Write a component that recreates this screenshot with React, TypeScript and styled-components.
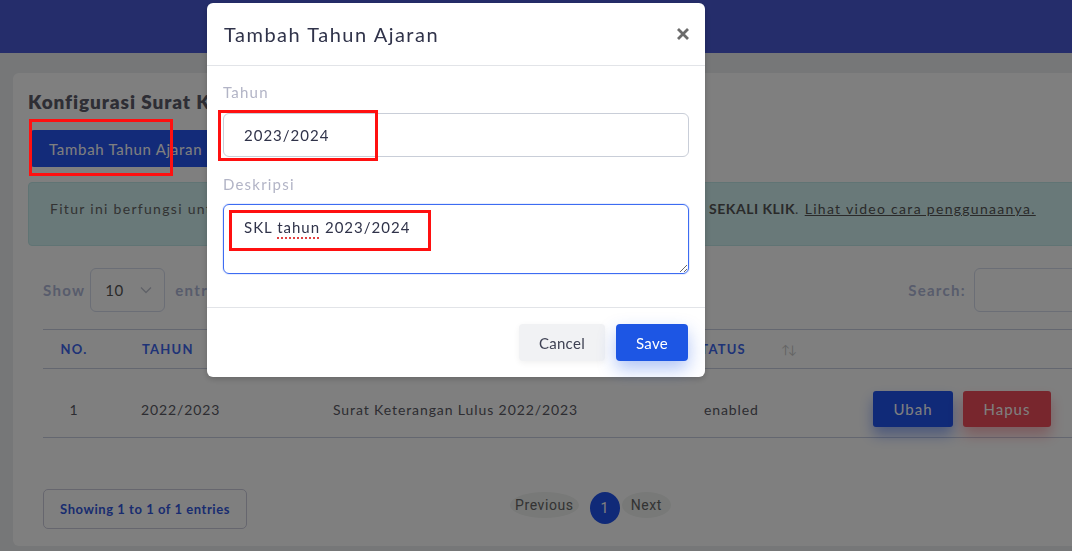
import React from 'react';
import styled, { createGlobalStyle } from 'styled-components';

const GlobalStyle = createGlobalStyle`
  body {
    margin: 0;
    background: #eceef0;
    font-family: Lato, 'Noto Sans', sans-serif;
    letter-spacing: 0.6px;
    overflow: hidden;
  }
`;

const Page = styled.div`
  width: 1154px;
  min-height: 100vh;
`;

const TopBar = styled.header`
  height: 53px;
  background: #4a5bd6;
`;

const Main = styled.main`
  padding: 20px 0 0 13px;
`;

const Card = styled.section`
  background: #fff;
  border-radius: 6px;
  padding: 17px 0 17px 15px;
  display: flex;
  flex-direction: column;
`;

const Title = styled.h1`
  margin: 0;
  font-size: 19px;
  line-height: 24px;
  font-weight: 800;
  color: #5c5c6a;
  letter-spacing: 0.9px;
`;

const PrimaryButton = styled.button`
  align-self: flex-start;
  margin: 16px 0 0 3px;
  height: 37px;
  padding: 0 18px;
  border: 0;
  border-radius: 3px;
  background: #2656f2;
  color: #fff;
  font: inherit;
  font-size: 15px;
  letter-spacing: 0.7px;
`;

const Alert = styled.div`
  margin-top: 15px;
  height: 64px;
  box-sizing: border-box;
  padding: 17px 21px 0;
  background: #d2f3f3;
  border: 1px solid #c0e8e8;
  border-radius: 4px;
  color: #666;
  font-size: 14px;
  line-height: 18px;
  letter-spacing: 1.3px;
  white-space: nowrap;

  b {
    color: #555;
    margin-left: 15px;
    letter-spacing: 0.5px;
  }
  u {
    color: #555;
    margin-left: 5px;
  }
`;

const TableArea = styled.div`
  padding: 0 0 0 15px;
`;

const Controls = styled.div`
  margin-top: 22px;
  height: 44px;
  display: flex;
  align-items: center;
`;

const ControlLabel = styled.span`
  font-size: 15px;
  font-weight: 700;
  color: #b0b8d8;
  letter-spacing: 1.3px;
`;

const SelectBox = styled.div`
  margin: 0 10px 0 5px;
  width: 75px;
  height: 44px;
  box-sizing: border-box;
  border: 1px solid #d6dcec;
  border-radius: 6px;
  display: flex;
  align-items: center;
  justify-content: space-between;
  padding: 0 12px 0 14px;
  font-size: 15px;
  color: #555;
`;

const SearchGroup = styled.div`
  margin-left: auto;
  display: flex;
  align-items: center;
  gap: 8px;
`;

const SearchInput = styled.div`
  width: 180px;
  height: 44px;
  box-sizing: border-box;
  border: 1px solid #d6dcec;
  border-radius: 6px;
`;

const Table = styled.div`
  margin-top: 17px;
  border-bottom: 1px solid #c8cee0;
`;

const Row = styled.div<{ $head?: boolean }>`
  display: grid;
  grid-template-columns: 62px 228px 371px 169px 1fr;
  align-items: center;
  height: ${p => (p.$head ? '39px' : '69px')};
  border-top: 1px solid #c8cee0;
  padding-top: ${p => (p.$head ? '0' : '12px')};
  box-sizing: border-box;
  font-size: ${p => (p.$head ? '13px' : '14px')};
  font-weight: ${p => (p.$head ? 700 : 400)};
  color: ${p => (p.$head ? '#3d66ee' : '#5a5a64')};
  letter-spacing: ${p => (p.$head ? '1.2px' : '0.9px')};
`;

const Cell = styled.div<{ $center?: boolean; $shift?: number }>`
  margin-left: ${p => p.$shift ?? 0}px;
  display: flex;
  align-items: center;
  justify-content: ${p => (p.$center ? 'center' : 'flex-start')};
  gap: 35px;
`;

const SortIcon = styled.span`
  color: #c8c8c8;
  font-size: 12px;
  letter-spacing: -2px;
  font-weight: 400;
`;

const Actions = styled.div`
  display: flex;
  gap: 10px;
`;

const RowButton = styled.button<{ $tone: 'blue' | 'red' }>`
  height: 36px;
  width: ${p => (p.$tone === 'blue' ? 80 : 88)}px;
  border: 0;
  border-radius: 3px;
  font: inherit;
  font-size: 15px;
  letter-spacing: 1px;
  color: #fff;
  background: ${p => (p.$tone === 'blue' ? '#2054f0' : '#f04c5a')};
  box-shadow: 0 8px 14px ${p => (p.$tone === 'blue' ? 'rgba(32,84,240,0.45)' : 'rgba(240,76,90,0.4)')};
`;

const Footer = styled.div`
  margin-top: 51px;
  display: flex;
  align-items: flex-start;
  gap: 263px;
`;

const InfoBox = styled.div`
  width: 204px;
  height: 40px;
  box-sizing: border-box;
  border: 1px solid #ccd;
  border-radius: 5px;
  display: flex;
  align-items: center;
  justify-content: center;
  font-size: 13px;
  font-weight: 700;
  letter-spacing: 0.55px;
  color: #3358e0;
`;

const Pager = styled.div`
  margin-top: 3px;
  display: flex;
  align-items: flex-start;
`;

const PageLink = styled.span<{ $active?: boolean; $gap?: number; $pad?: number }>`
  display: flex;
  align-items: center;
  justify-content: center;
  height: ${p => (p.$active ? '32px' : '26px')};
  width: ${p => (p.$active ? '30px' : 'auto')};
  padding: 0 ${p => p.$pad ?? 0}px;
  margin-left: ${p => p.$gap ?? 0}px;
  border-radius: 50%;
  background: ${p => (p.$active ? '#2054f0' : '#f0f3f0')};
  color: ${p => (p.$active ? '#fff' : '#666')};
  font-family: Roboto, sans-serif;
  font-size: 14px;
  letter-spacing: 0.6px;
`;

const Backdrop = styled.div`
  position: fixed;
  inset: 0;
  background: rgba(0, 0, 0, 0.5);
`;

const Modal = styled.div`
  position: fixed;
  left: 207px;
  top: 3px;
  width: 498px;
  background: #fff;
  border-radius: 6px;
  box-shadow: 0 2px 6px rgba(0, 0, 0, 0.2);
  color: #30334a;
`;

const ModalHeader = styled.div`
  height: 63px;
  box-sizing: border-box;
  display: flex;
  align-items: center;
  justify-content: space-between;
  padding: 0 16px 0 17px;
  border-bottom: 1px solid #e2e4e8;
`;

const ModalTitle = styled.h2`
  margin: 0;
  font-size: 20px;
  font-weight: 400;
  letter-spacing: 1.5px;
`;

const CloseButton = styled.button`
  border: 0;
  background: none;
  padding: 0;
  display: flex;
`;

const ModalBody = styled.div`
  padding: 16px 16px 33px;
  border-bottom: 1px solid #e2e4e8;
  display: flex;
  flex-direction: column;
`;

const FieldLabel = styled.label<{ $first?: boolean }>`
  margin-top: ${p => (p.$first ? 0 : 17)}px;
  font-size: 15px;
  line-height: 20px;
  color: #b2b4c6;
  letter-spacing: 1.2px;
`;

const TextInput = styled.div`
  margin-top: 11px;
  height: 44px;
  box-sizing: border-box;
  border: 1px solid #c9ced8;
  border-radius: 6px;
  display: flex;
  align-items: center;
  padding-left: 20px;
  font-size: 15px;
  letter-spacing: 1px;
`;

const TextArea = styled.div`
  margin-top: 10px;
  height: 70px;
  box-sizing: border-box;
  border: 1px solid #3d6cf2;
  border-radius: 6px;
  box-shadow: 0 0 0 1px rgba(61, 108, 242, 0.12);
  padding: 13px 20px;
  font-size: 15px;
  line-height: 19px;
  letter-spacing: 1px;
  resize: vertical;
  overflow: auto;
`;

const Misspelled = styled.span`
  text-decoration: underline dotted #e04040;
  text-decoration-thickness: 2px;
  text-underline-offset: 4px;
`;

const ModalFooter = styled.div`
  height: 69px;
  display: flex;
  align-items: center;
  justify-content: flex-end;
  gap: 11px;
  padding-right: 17px;
`;

const ModalButton = styled.button<{ $primary?: boolean }>`
  height: 37px;
  padding: 0 20px;
  border: 0;
  border-radius: 4px;
  font: inherit;
  font-size: 15px;
  letter-spacing: 0.3px;
  background: ${p => (p.$primary ? '#1d56e4' : '#f1f2f4')};
  color: ${p => (p.$primary ? '#fff' : '#3f4254')};
  box-shadow: ${p => (p.$primary ? '0 8px 18px rgba(29,86,228,0.35)' : '0 2px 6px rgba(0,0,0,0.06)')};
`;

const Marker = styled.div`
  position: fixed;
  border: 3px solid #ff1010;
  box-sizing: border-box;
  pointer-events: none;
`;

const markers = [
  { left: 29, top: 119, width: 144, height: 57 },
  { left: 218, top: 110, width: 160, height: 51 },
  { left: 229, top: 210, width: 202, height: 41 },
];

export default function App() {
  return (
    <>
      <GlobalStyle />
      <Page>
        <TopBar />
        <Main>
          <Card>
            <Title>Konfigurasi Surat Keterangan Lulus</Title>
            <PrimaryButton>Tambah Tahun Ajaran</PrimaryButton>
            <Alert>
              Fitur ini berfungsi untuk membuat surat keterangan lulus seluruh siswa secara otomatis
              <b>SEKALI KLIK</b>.<u>Lihat video cara penggunaanya.</u>
            </Alert>
            <TableArea>
              <Controls>
                <ControlLabel>Show</ControlLabel>
                <SelectBox>
                  10
                  <svg width="12" height="8" viewBox="0 0 12 8" fill="none" stroke="#c0c4d0" strokeWidth="1.4">
                    <path d="M1 1.5l5 5 5-5" />
                  </svg>
                </SelectBox>
                <ControlLabel>entries</ControlLabel>
                <SearchGroup>
                  <ControlLabel>Search:</ControlLabel>
                  <SearchInput />
                </SearchGroup>
              </Controls>
              <Table>
                <Row $head>
                  <Cell $center>NO.</Cell>
                  <Cell $shift={37}>TAHUN</Cell>
                  <Cell>DESKRIPSI</Cell>
                  <Cell $shift={-12}>
                    STATUS <SortIcon>↑↓</SortIcon>
                  </Cell>
                  <Cell />
                </Row>
                <Row>
                  <Cell $center>1</Cell>
                  <Cell $shift={36}>2022/2023</Cell>
                  <Cell>Surat Keterangan Lulus 2022/2023</Cell>
                  <Cell>enabled</Cell>
                  <Actions>
                    <RowButton $tone="blue">Ubah</RowButton>
                    <RowButton $tone="red">Hapus</RowButton>
                  </Actions>
                </Row>
              </Table>
              <Footer>
                <InfoBox>Showing 1 to 1 of 1 entries</InfoBox>
                <Pager>
                  <PageLink $pad={5}>Previous</PageLink>
                  <PageLink $active $gap={11}>
                    1
                  </PageLink>
                  <PageLink $gap={2} $pad={9}>
                    Next
                  </PageLink>
                </Pager>
              </Footer>
            </TableArea>
          </Card>
        </Main>
      </Page>
      <Backdrop />
      <Modal>
        <ModalHeader>
          <ModalTitle>Tambah Tahun Ajaran</ModalTitle>
          <CloseButton aria-label="Close">
            <svg width="12" height="12" viewBox="0 0 12 12" stroke="#6b6b6b" strokeWidth="2.8">
              <path d="M1 1l10 10M11 1L1 11" />
            </svg>
          </CloseButton>
        </ModalHeader>
        <ModalBody>
          <FieldLabel $first>Tahun</FieldLabel>
          <TextInput>2023/2024</TextInput>
          <FieldLabel>Deskripsi</FieldLabel>
          <TextArea role="textbox">
            SKL <Misspelled>tahun</Misspelled> 2023/2024
          </TextArea>
        </ModalBody>
        <ModalFooter>
          <ModalButton>Cancel</ModalButton>
          <ModalButton $primary>Save</ModalButton>
        </ModalFooter>
      </Modal>
      {markers.map((m, i) => (
        <Marker key={i} style={m} />
      ))}
    </>
  );
}
